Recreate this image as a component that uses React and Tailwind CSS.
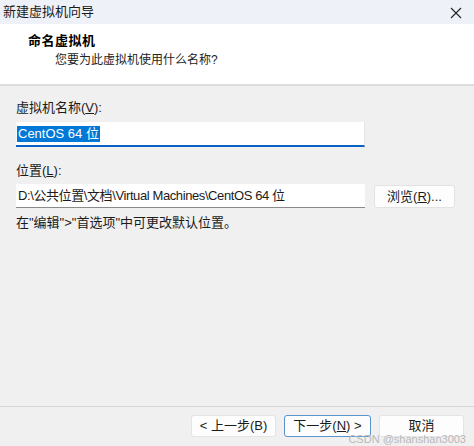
export default function App() {
  const font = { fontFamily: '"Liberation Sans", "Noto Sans CJK SC", sans-serif' }

  return (
    <div
      className="relative flex h-[446px] w-[474px] flex-col overflow-hidden bg-[#f0f0f0] text-[13px] text-[#1b1b1b]"
      style={font}
    >
      {/* Title bar */}
      <div className="flex h-[24px] shrink-0 items-center justify-between bg-[#eef2f8] pl-[3px] pr-[12px]">
        <span className="text-[13px] leading-[18px] text-[#1a1a1a]">新建虚拟机向导</span>
        <svg width="12" height="12" viewBox="0 0 12 12" className="mt-[2px]">
          <path d="M1 1 L11 11 M11 1 L1 11" stroke="#222" strokeWidth="1.1" fill="none" />
        </svg>
      </div>

      {/* Header */}
      <div className="flex h-[60px] shrink-0 flex-col bg-white pl-[28px] pt-[8px]">
        <span className="text-[13px] font-bold leading-[18px] tracking-[0.5px] text-black">命名虚拟机</span>
        <span className="ml-[27px] mt-[1px] text-[12px] leading-[18px] text-[#222]">您要为此虚拟机使用什么名称?</span>
      </div>
      <div className="h-[2px] shrink-0 bg-[#dcdcdc]" />

      {/* Body */}
      <div className="flex flex-1 flex-col px-[16px] pt-[13px]">
        <span className="leading-[18px]">
          虚拟机名称(<u>V</u>):
        </span>
        <div className="mt-[5px] flex h-[25px] w-[349px] items-center border-b-2 border-r border-[#0a63c4] border-r-[#e4e4e4] bg-white pl-[1px]">
          <span className="bg-[#0078d7] px-[1px] leading-[16px] text-white">CentOS 64 位</span>
        </div>

        <span className="mt-[15px] leading-[18px]">
          位置(<u>L</u>):
        </span>
        <div className="mt-[4px] flex items-center gap-[9px]">
          <div className="flex h-[24px] w-[349px] items-center border-b border-[#8a8a8a] bg-white pl-[2px] tracking-[-0.4px]">
            D:\公共位置\文档\Virtual Machines\CentOS 64 位
          </div>
          <button className="mt-[1px] flex h-[23px] w-[81px] items-center justify-center rounded-[3px] border border-[#e2e2e2] bg-[#fdfdfd]">
            浏览(<u>R</u>)...
          </button>
        </div>

        <span className="mt-[6px] leading-[18px]">在"编辑"&gt;"首选项"中可更改默认位置。</span>
      </div>

      {/* Footer */}
      <div className="h-px shrink-0 bg-[#d6d6d6]" />
      <div className="flex h-[39px] shrink-0 justify-end gap-[8px] pr-[10px] pt-[8px]">
        <button className="flex h-[22px] w-[85px] items-center justify-center rounded-[3px] border border-[#e4e4e4] bg-[#fdfdfd]">
          &lt; 上一步(B)
        </button>
        <button className="flex h-[22px] w-[87px] items-center justify-center rounded-[3px] border border-[#5b95d0] bg-[#fdfdfd]">
          下一步(<u>N</u>) &gt;
        </button>
        <button className="flex h-[22px] w-[85px] items-center justify-center rounded-[3px] border border-[#e4e4e4] bg-[#fdfdfd]">
          取消
        </button>
      </div>

      {/* Watermark */}
      <span
        className="absolute bottom-[1px] right-[8px] text-[11px] leading-[12px] text-[#b8b8b8]"
        style={{ fontFamily: '"Liberation Sans", sans-serif' }}
      >
        CSDN @shanshan3003
      </span>
    </div>
  )
}
